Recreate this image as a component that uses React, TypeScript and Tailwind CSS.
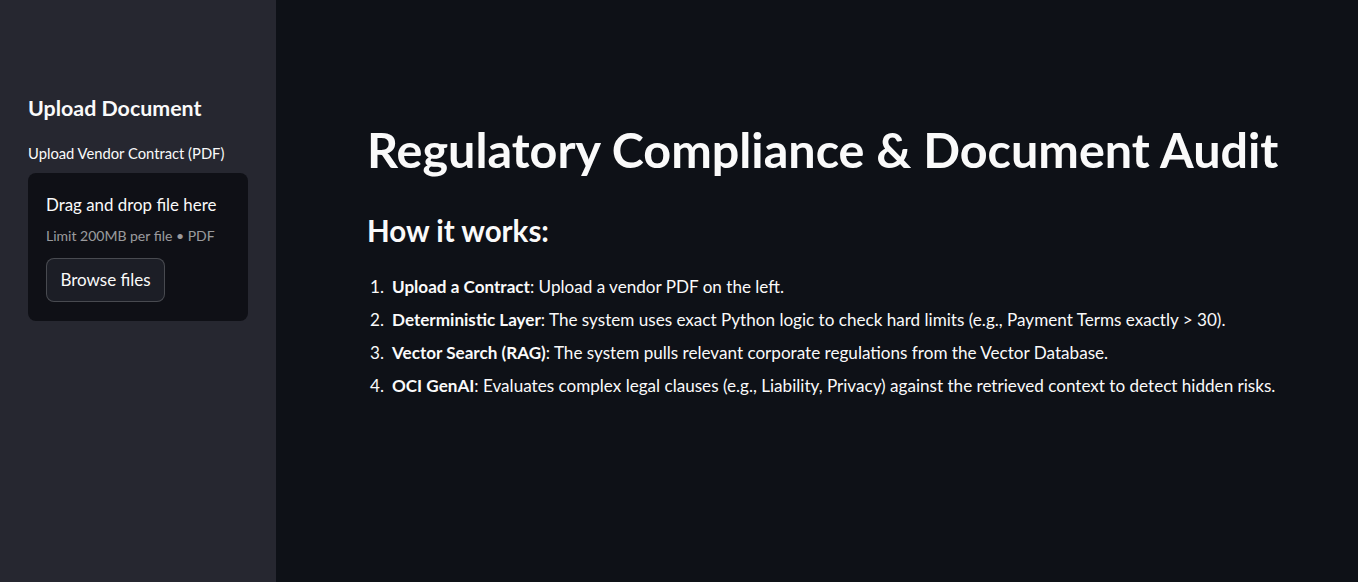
import React from "react";

const font = { fontFamily: "Lato, 'Noto Sans', sans-serif" };

const steps: { title: string; text: string }[] = [
  { title: "Upload a Contract", text: ": Upload a vendor PDF on the left." },
  {
    title: "Deterministic Layer",
    text: ": The system uses exact Python logic to check hard limits (e.g., Payment Terms exactly > 30).",
  },
  {
    title: "Vector Search (RAG)",
    text: ": The system pulls relevant corporate regulations from the Vector Database.",
  },
  {
    title: "OCI GenAI",
    text: ": Evaluates complex legal clauses (e.g., Liability, Privacy) against the retrieved context to detect hidden risks.",
  },
];

export default function App() {
  return (
    <div
      className="flex h-[582px] w-full overflow-hidden bg-[#0e1117] text-[#fafafa]"
      style={font}
    >
      {/* Sidebar */}
      <aside className="w-[276px] shrink-0 bg-[#262730] px-[28px] pt-[94px]">
        <h2 className="text-[21.4px] font-bold leading-[28px]">Upload Document</h2>
        <div className="mt-[21px] text-[14.75px] leading-[20px]">Upload Vendor Contract (PDF)</div>
        <div className="mt-[10px] flex w-[220px] flex-col items-start rounded-[8px] bg-[#0f1016] px-[18px] pb-[19px] pt-[20px]">
          <div className="text-[16.9px] leading-[24px]">Drag and drop file here</div>
          <div className="mt-[9px] text-[14px] leading-[20px] text-[#fafafa]/60">
            Limit 200MB per file • PDF
          </div>
          <button className="mt-[12px] flex h-[44px] w-[119px] items-center justify-center rounded-[8px] border border-[#fafafa]/20 bg-[#1c1e26] text-[17px] text-[#fafafa]">
            Browse files
          </button>
        </div>
      </aside>

      {/* Main content */}
      <main className="flex-1 pl-[91px] pt-[119px]">
        <h1 className="text-[48.5px] font-bold leading-[60px]">
          Regulatory Compliance &amp; Document Audit
        </h1>
        <h3 className="mt-[32px] text-[29.5px] font-bold leading-[40px]">How it works:</h3>
        <ol className="mt-[23px] flex flex-col gap-[7px] pl-[25px] text-[17.1px] leading-[26px]">
          {steps.map((s, i) => (
            <li key={s.title} className="relative">
              <span className="absolute -left-[22px]">{i + 1}.</span>
              <strong className="font-bold">{s.title}</strong>
              {s.text}
            </li>
          ))}
        </ol>
      </main>
    </div>
  );
}
